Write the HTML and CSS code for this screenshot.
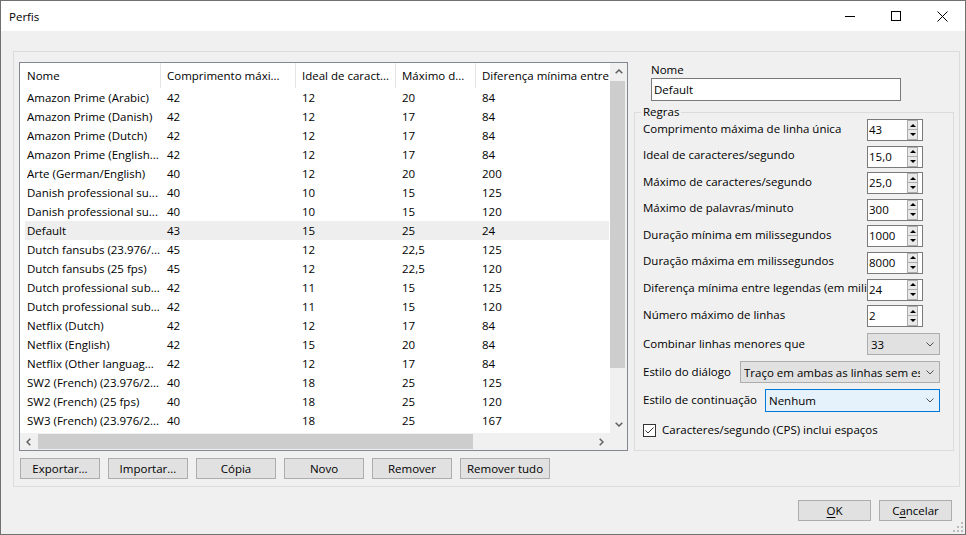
FILE: index.html
```html
<!DOCTYPE html>
<html lang="pt">
<head>
<meta charset="utf-8">
<title>Perfis</title>
<link rel="stylesheet" href="styles.css">
</head>
<body>
<div class="window">
  <div class="titlebar">
    <span class="title">Perfis</span>
    <div class="caption">
      <span class="cap"><svg width="10" height="10" viewBox="0 0 10 10"><line x1="0" y1="5.5" x2="10" y2="5.5" stroke="#000" stroke-width="1"/></svg></span>
      <span class="cap"><svg width="10" height="10" viewBox="0 0 10 10"><rect x="0.5" y="0.5" width="9" height="9" fill="none" stroke="#000" stroke-width="1"/></svg></span>
      <span class="cap"><svg width="11" height="11" viewBox="0 0 11 11"><path d="M0.5 0.5 L10.5 10.5 M10.5 0.5 L0.5 10.5" stroke="#000" stroke-width="1" fill="none"/></svg></span>
    </div>
  </div>
  <div class="client">
    <div class="group-main">
      <div class="left">
        <div class="list">
          <div class="list-top">
            <div class="lv">
              <div class="lv-head">
                <div class="hc hc1">Nome</div>
                <div class="hc hc2">Comprimento máxi...</div>
                <div class="hc hc3">Ideal de caract...</div>
                <div class="hc hc4">Máximo d...</div>
                <div class="hc hc5">Diferença mínima entre</div>
              </div>
              <div class="row"><div class="c1">Amazon Prime (Arabic)</div><div class="c2">42</div><div class="c3">12</div><div class="c4">20</div><div class="c5">84</div></div>
              <div class="row"><div class="c1">Amazon Prime (Danish)</div><div class="c2">42</div><div class="c3">12</div><div class="c4">17</div><div class="c5">84</div></div>
              <div class="row"><div class="c1">Amazon Prime (Dutch)</div><div class="c2">42</div><div class="c3">12</div><div class="c4">17</div><div class="c5">84</div></div>
              <div class="row"><div class="c1">Amazon Prime (English...</div><div class="c2">42</div><div class="c3">12</div><div class="c4">17</div><div class="c5">84</div></div>
              <div class="row"><div class="c1">Arte (German/English)</div><div class="c2">40</div><div class="c3">12</div><div class="c4">20</div><div class="c5">200</div></div>
              <div class="row"><div class="c1">Danish professional su...</div><div class="c2">40</div><div class="c3">10</div><div class="c4">15</div><div class="c5">125</div></div>
              <div class="row"><div class="c1">Danish professional su...</div><div class="c2">40</div><div class="c3">10</div><div class="c4">15</div><div class="c5">120</div></div>
              <div class="row sel"><div class="c1">Default</div><div class="c2">43</div><div class="c3">15</div><div class="c4">25</div><div class="c5">24</div></div>
              <div class="row"><div class="c1">Dutch fansubs (23.976/...</div><div class="c2">45</div><div class="c3">12</div><div class="c4">22,5</div><div class="c5">125</div></div>
              <div class="row"><div class="c1">Dutch fansubs (25 fps)</div><div class="c2">45</div><div class="c3">12</div><div class="c4">22,5</div><div class="c5">120</div></div>
              <div class="row"><div class="c1">Dutch professional sub...</div><div class="c2">42</div><div class="c3">11</div><div class="c4">15</div><div class="c5">125</div></div>
              <div class="row"><div class="c1">Dutch professional sub...</div><div class="c2">42</div><div class="c3">11</div><div class="c4">15</div><div class="c5">120</div></div>
              <div class="row"><div class="c1">Netflix (Dutch)</div><div class="c2">42</div><div class="c3">12</div><div class="c4">17</div><div class="c5">84</div></div>
              <div class="row"><div class="c1">Netflix (English)</div><div class="c2">42</div><div class="c3">15</div><div class="c4">20</div><div class="c5">84</div></div>
              <div class="row"><div class="c1">Netflix (Other languag...</div><div class="c2">42</div><div class="c3">12</div><div class="c4">17</div><div class="c5">84</div></div>
              <div class="row"><div class="c1">SW2 (French) (23.976/2...</div><div class="c2">40</div><div class="c3">18</div><div class="c4">25</div><div class="c5">125</div></div>
              <div class="row"><div class="c1">SW2 (French) (25 fps)</div><div class="c2">40</div><div class="c3">18</div><div class="c4">25</div><div class="c5">120</div></div>
              <div class="row"><div class="c1">SW3 (French) (23.976/2...</div><div class="c2">40</div><div class="c3">18</div><div class="c4">25</div><div class="c5">167</div></div>
            </div>
            <div class="vscroll">
              <div class="sarrow"><svg width="8" height="5" viewBox="0 0 8 5"><polyline points="0.7,4.3 4,1 7.3,4.3" fill="none" stroke="#606060" stroke-width="1.5"/></svg></div>
              <div class="vtrack"><div class="vthumb"></div></div>
              <div class="sarrow"><svg width="8" height="5" viewBox="0 0 8 5"><polyline points="0.7,0.7 4,4 7.3,0.7" fill="none" stroke="#606060" stroke-width="1.5"/></svg></div>
            </div>
          </div>
          <div class="list-bottom">
            <div class="hscroll">
              <div class="sarrow-h"><svg width="5" height="8" viewBox="0 0 5 8"><polyline points="4.3,0.7 1,4 4.3,7.3" fill="none" stroke="#606060" stroke-width="1.5"/></svg></div>
              <div class="htrack"><div class="hthumb"></div></div>
              <div class="sarrow-h"><svg width="5" height="8" viewBox="0 0 5 8"><polyline points="0.7,0.7 4,4 0.7,7.3" fill="none" stroke="#606060" stroke-width="1.5"/></svg></div>
            </div>
            <div class="corner"></div>
          </div>
        </div>
        <div class="list-buttons">
          <button class="btn">Exportar...</button>
          <button class="btn">Importar...</button>
          <button class="btn">Cópia</button>
          <button class="btn">Novo</button>
          <button class="btn">Remover</button>
          <button class="btn btn-wide">Remover tudo</button>
        </div>
      </div>
      <div class="right">
        <div class="nome-label">Nome</div>
        <div class="textbox">Default</div>
        <div class="regras">
          <div class="legend">Regras</div>
          <div class="rrow"><div class="rlabel">Comprimento máxima de linha única</div><div class="spin"><span class="spin-val">43</span><span class="spin-btns"><span class="sb"><i class="tri-up"></i></span><span class="sb"><i class="tri-down"></i></span></span></div></div>
          <div class="rrow"><div class="rlabel">Ideal de caracteres/segundo</div><div class="spin"><span class="spin-val">15,0</span><span class="spin-btns"><span class="sb"><i class="tri-up"></i></span><span class="sb"><i class="tri-down"></i></span></span></div></div>
          <div class="rrow"><div class="rlabel">Máximo de caracteres/segundo</div><div class="spin"><span class="spin-val">25,0</span><span class="spin-btns"><span class="sb"><i class="tri-up"></i></span><span class="sb"><i class="tri-down"></i></span></span></div></div>
          <div class="rrow"><div class="rlabel">Máximo de palavras/minuto</div><div class="spin"><span class="spin-val">300</span><span class="spin-btns"><span class="sb"><i class="tri-up"></i></span><span class="sb"><i class="tri-down"></i></span></span></div></div>
          <div class="rrow"><div class="rlabel">Duração mínima em milissegundos</div><div class="spin"><span class="spin-val">1000</span><span class="spin-btns"><span class="sb"><i class="tri-up"></i></span><span class="sb"><i class="tri-down"></i></span></span></div></div>
          <div class="rrow"><div class="rlabel">Duração máxima em milissegundos</div><div class="spin"><span class="spin-val">8000</span><span class="spin-btns"><span class="sb"><i class="tri-up"></i></span><span class="sb"><i class="tri-down"></i></span></span></div></div>
          <div class="rrow"><div class="rlabel">Diferença mínima entre legendas (em milissegundos)</div><div class="spin"><span class="spin-val">24</span><span class="spin-btns"><span class="sb"><i class="tri-up"></i></span><span class="sb"><i class="tri-down"></i></span></span></div></div>
          <div class="rrow"><div class="rlabel">Número máximo de linhas</div><div class="spin"><span class="spin-val">2</span><span class="spin-btns"><span class="sb"><i class="tri-up"></i></span><span class="sb"><i class="tri-down"></i></span></span></div></div>
          <div class="crow crow-first"><div class="clabel">Combinar linhas menores que</div><div class="combo combo-small"><span class="combo-text">33</span><span class="chev"><svg width="8" height="5" viewBox="0 0 8 5"><polyline points="0.5,0.5 4,4 7.5,0.5" fill="none" stroke="#505050" stroke-width="1"/></svg></span></div></div>
          <div class="crow crow-mid"><div class="clabel">Estilo do diálogo</div><div class="combo combo-dialog"><span class="combo-text">Traço em ambas as linhas sem espaço</span><span class="chev"><svg width="8" height="5" viewBox="0 0 8 5"><polyline points="0.5,0.5 4,4 7.5,0.5" fill="none" stroke="#505050" stroke-width="1"/></svg></span></div></div>
          <div class="crow crow-last"><div class="clabel">Estilo de continuação</div><div class="combo combo-focus"><span class="combo-text">Nenhum</span><span class="chev"><svg width="8" height="5" viewBox="0 0 8 5"><polyline points="0.5,0.5 4,4 7.5,0.5" fill="none" stroke="#505050" stroke-width="1"/></svg></span></div></div>
          <div class="checkrow"><span class="checkbox"><svg width="11" height="11" viewBox="0 0 11 11"><polyline points="1.5,5.5 4,8 9.5,2.5" fill="none" stroke="#333" stroke-width="1"/></svg></span><span class="check-label">Caracteres/segundo (CPS) inclui espaços</span></div>
        </div>
      </div>
    </div>
    <div class="dialog-buttons">
      <button class="btn btn-dlg"><u>O</u>K</button>
      <button class="btn btn-dlg">C<u>a</u>ncelar</button>
    </div>
  </div>
  <div class="grip"><svg width="10" height="10" viewBox="0 0 10 10"><g fill="#bcbcbc"><rect x="8" y="0" width="2" height="2"/><rect x="4" y="4" width="2" height="2"/><rect x="8" y="4" width="2" height="2"/><rect x="0" y="8" width="2" height="2"/><rect x="4" y="8" width="2" height="2"/><rect x="8" y="8" width="2" height="2"/></g></svg></div>
</div>
</body>
</html>
```

FILE: styles.css
```css
* { box-sizing: border-box; }
html, body { margin: 0; padding: 0; }
body {
  width: 966px;
  height: 535px;
  overflow: hidden;
  font-family: "Open Sans", "Noto Sans", sans-serif;
  font-size: 11.5px;
  color: #000;
  background: #f0f0f0;
}
.window {
  width: 966px;
  height: 535px;
  border: 1px solid #707070;
  display: flex;
  flex-direction: column;
  position: relative;
  background: #f0f0f0;
}
.titlebar {
  height: 30px;
  flex: none;
  background: #fff;
  display: flex;
  align-items: center;
}
.title { flex: 1; padding-left: 8px; font-size: 11.5px; }
.caption { display: flex; height: 30px; }
.cap { width: 46px; height: 30px; display: flex; align-items: center; justify-content: center; }
.cap svg { display: block; }

.client {
  flex: 1;
  padding: 20px 5px 0 12px;
  display: flex;
  flex-direction: column;
}
.group-main {
  width: 947px;
  height: 436px;
  flex: none;
  border: 1px solid #dcdcdc;
  padding: 10px 5px 0 5px;
  display: flex;
  gap: 6px;
}
.left { width: 609px; flex: none; display: flex; flex-direction: column; }
.list {
  width: 609px;
  height: 389px;
  border: 1px solid #828790;
  background: #fff;
  display: flex;
  flex-direction: column;
}
.list-top { display: flex; height: 370px; }
.lv { width: 590px; height: 370px; overflow: hidden; background: #fff; }
.lv-head { display: flex; height: 25px; width: 700px; }
.hc {
  height: 25px;
  line-height: 25px;
  white-space: nowrap;
  overflow: hidden;
  border-right: 1px solid #e5e5e5;
  padding-left: 6px;
  flex: none;
}
.hc1 { width: 141px; padding-left: 7px; }
.hc2 { width: 135px; }
.hc3 { width: 100px; }
.hc4 { width: 80px; }
.hc5 { width: 200px; border-right: none; }

.row {
  display: flex;
  height: 19px;
  line-height: 19px;
  margin-left: 5px;
  width: 584px;
  white-space: nowrap;
}
.row > div { overflow: hidden; flex: none; padding-left: 6px; }
.row .c1 { width: 136px; padding-left: 2px; }
.row .c2 { width: 135px; }
.row .c3 { width: 100px; }
.row .c4 { width: 80px; }
.row .c5 { flex: 1; }
.row.sel { background: #eeeeee; }

.vscroll { width: 17px; height: 370px; background: #f0f0f0; display: flex; flex-direction: column; }
.sarrow { height: 17px; flex: none; display: flex; align-items: center; justify-content: center; }
.sarrow svg, .sarrow-h svg { display: block; }
.vtrack { flex: 1; padding-top: 1px; }
.vthumb { width: 15px; height: 287px; margin-left: 0; background: #cdcdcd; }
.list-bottom { display: flex; height: 17px; }
.hscroll { width: 590px; height: 17px; background: #f0f0f0; display: flex; }
.sarrow-h { width: 17px; flex: none; display: flex; align-items: center; justify-content: center; }
.htrack { flex: 1; padding: 1px 0 0 1px; }
.hthumb { width: 435px; height: 15px; background: #cdcdcd; }
.corner { width: 17px; height: 17px; background: #f0f0f0; }

.list-buttons { display: flex; gap: 8px; margin-top: 7px; padding-left: 1px; }
.btn {
  font-family: inherit;
  font-size: 11.5px;
  color: #000;
  width: 80px;
  height: 21px;
  padding: 0;
  border: 1px solid #adadad;
  background: #e1e1e1;
  line-height: 19px;
  text-align: center;
}
.btn-wide { width: 90px; }
.btn u { text-decoration-thickness: 1px; text-underline-offset: 2px; }

.right { width: 320px; flex: none; display: flex; flex-direction: column; }
.nome-label { margin-left: 17px; height: 16px; line-height: 16px; }
.textbox {
  margin-left: 17px;
  width: 250px;
  height: 23px;
  border: 1px solid #7a7a7a;
  background: #fff;
  padding-left: 2px;
  line-height: 21px;
}
.regras {
  margin-top: 11px;
  height: 339px;
  border: 1px solid #dcdcdc;
  padding: 0 13px 0 8px;
  display: flex;
  flex-direction: column;
}
.legend {
  align-self: flex-start;
  margin: -8px 0 0 -2px;
  padding: 0 2px;
  height: 14px;
  line-height: 14px;
  background: #f0f0f0;
}
.rrow { display: flex; align-items: center; height: 22px; margin-top: 4.6px; }
.legend + .rrow { margin-top: 0; }
.rlabel { width: 224px; flex: none; white-space: nowrap; overflow: hidden; padding-bottom: 3px; line-height: 16px; }
.spin {
  width: 56px;
  height: 22px;
  border: 1px solid #7a7a7a;
  background: #fff;
  display: flex;
  align-items: center;
}
.spin-val { flex: 1; padding-left: 1px; line-height: 20px; }
.spin-btns { width: 11px; height: 20px; margin-right: 4px; display: flex; flex-direction: column; }
.sb {
  height: 10px;
  border: 1px solid #adadad;
  background: #e9e9e9;
  display: flex;
  align-items: center;
  justify-content: center;
}
.sb + .sb { margin-top: -1px; height: 11px; }
.tri-up { width: 0; height: 0; border-left: 3px solid transparent; border-right: 3px solid transparent; border-bottom: 3px solid #000; }
.tri-down { width: 0; height: 0; border-left: 3px solid transparent; border-right: 3px solid transparent; border-top: 3px solid #000; }

.crow { display: flex; align-items: center; height: 22px; }
.crow-first { margin-top: 6px; }
.crow-mid { margin-top: 6px; }
.crow-last { margin-top: 6px; height: 23px; }
.clabel { white-space: nowrap; flex: none; line-height: 16px; padding-bottom: 1px; }
.combo {
  margin-left: auto;
  height: 100%;
  border: 1px solid #adadad;
  background: #e1e1e1;
  display: flex;
  align-items: center;
  padding-left: 3px;
}
.combo-small { width: 73px; }
.combo-dialog { width: 200px; }
.combo-focus { width: 175px; border-color: #0078d7; background: #e5f1fb; }
.combo-text { flex: 1; white-space: nowrap; overflow: hidden; }
.chev { width: 19px; flex: none; padding-left: 6px; display: flex; align-items: center; }
.chev svg { display: block; }

.checkrow { display: flex; align-items: center; margin-top: 12px; height: 13px; }
.checkbox {
  width: 13px;
  height: 13px;
  border: 1px solid #333;
  background: #fff;
  display: flex;
  align-items: center;
  justify-content: center;
}
.checkbox svg { display: block; }
.check-label { margin-left: 6px; white-space: nowrap; line-height: 16px; padding-bottom: 2px; }

.dialog-buttons { display: flex; justify-content: flex-end; gap: 8px; margin-top: 13px; padding-right: 8px; }
.btn-dlg { width: 73px; }

.grip { position: absolute; right: 2px; bottom: 2px; width: 10px; height: 10px; }
.grip svg { display: block; }
```
